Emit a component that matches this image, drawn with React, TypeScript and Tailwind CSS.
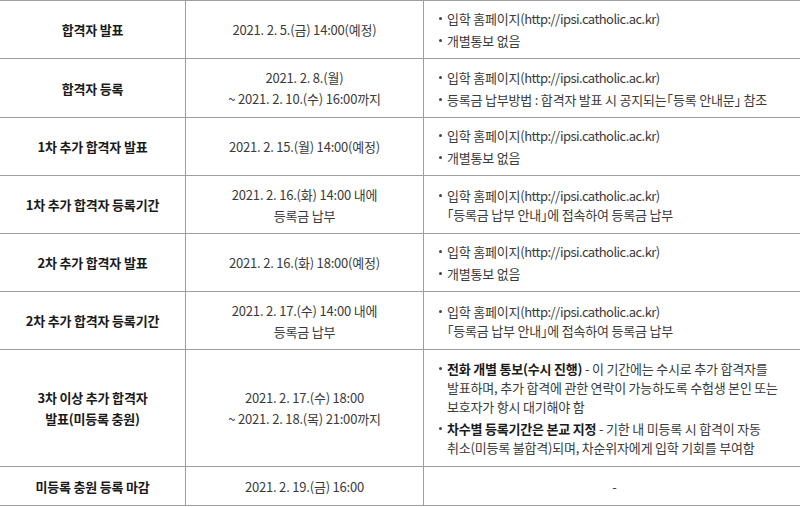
import React from 'react';

type Line = { bold?: string; text: React.ReactNode };

interface Row {
  title: React.ReactNode;
  date: React.ReactNode;
  notes: Line[][] | null;
  height: string;
}

const home = (
  <>
    입학 홈페이지<span className="tracking-[-0.55px]">(http://ipsi.catholic.ac.kr)</span>
  </>
);

const rows: Row[] = [
  {
    title: '합격자 발표',
    date: '2021. 2. 5.(금) 14:00(예정)',
    notes: [[{ text: home }], [{ text: '개별통보 없음' }]],
    height: 'h-[58px]',
  },
  {
    title: '합격자 등록',
    date: (
      <>
        2021. 2. 8.(월)
        <br />~ 2021. 2. 10.(수) 16:00까지
      </>
    ),
    notes: [[{ text: home }], [{ text: '등록금 납부방법 : 합격자 발표 시 공지되는｢등록 안내문｣ 참조' }]],
    height: 'h-[59px]',
  },
  {
    title: '1차 추가 합격자 발표',
    date: '2021. 2. 15.(월) 14:00(예정)',
    notes: [[{ text: home }], [{ text: '개별통보 없음' }]],
    height: 'h-[58px]',
  },
  {
    title: '1차 추가 합격자 등록기간',
    date: (
      <>
        2021. 2. 16.(화) 14:00 내에
        <br />
        등록금 납부
      </>
    ),
    notes: [[{ text: home }, { text: '｢등록금 납부 안내｣에 접속하여 등록금 납부' }]],
    height: 'h-[58px]',
  },
  {
    title: '2차 추가 합격자 발표',
    date: '2021. 2. 16.(화) 18:00(예정)',
    notes: [[{ text: home }], [{ text: '개별통보 없음' }]],
    height: 'h-[58px]',
  },
  {
    title: '2차 추가 합격자 등록기간',
    date: (
      <>
        2021. 2. 17.(수) 14:00 내에
        <br />
        등록금 납부
      </>
    ),
    notes: [[{ text: home }, { text: '｢등록금 납부 안내｣에 접속하여 등록금 납부' }]],
    height: 'h-[58px]',
  },
  {
    title: (
      <>
        3차 이상 추가 합격자
        <br />
        발표(미등록 충원)
      </>
    ),
    date: (
      <>
        2021. 2. 17.(수) 18:00
        <br />~ 2021. 2. 18.(목) 21:00까지
      </>
    ),
    notes: [
      [
        { bold: '전화 개별 통보(수시 진행)', text: ' - 이 기간에는 수시로 추가 합격자를' },
        { text: '발표하며, 추가 합격에 관한 연락이 가능하도록 수험생 본인 또는' },
        { text: '보호자가 항시 대기해야 함' },
      ],
      [
        { bold: '차수별 등록기간은 본교 지정', text: ' - 기한 내 미등록 시 합격이 자동' },
        { text: '취소(미등록 불합격)되며, 차순위자에게 입학 기회를 부여함' },
      ],
    ],
    height: 'h-[117px]',
  },
  {
    title: '미등록 충원 등록 마감',
    date: '2021. 2. 19.(금) 16:00',
    notes: null,
    height: 'h-[39px]',
  },
];

function Notes({ items }: { items: Line[][] | null }) {
  if (!items) {
    return <div className="w-full text-center">-</div>;
  }
  return (
    <ul className="flex flex-col gap-[3px]">
      {items.map((lines, i) => (
        <li key={i} className="flex">
          <span className="flex w-[8px] shrink-0 pt-[8px]">
            <span className="h-[3px] w-[3px] rounded-full bg-[#444]" />
          </span>
          <div>
            {lines.map((line, j) => (
              <div key={j} className="whitespace-nowrap">
                {line.bold && <b className="font-bold text-[#1a1a1a]">{line.bold}</b>}
                {line.text}
              </div>
            ))}
          </div>
        </li>
      ))}
    </ul>
  );
}

export default function App() {
  return (
    <div
      className="w-[800px] border-t border-[#9e9e9e] bg-white text-[13px] leading-[19px] tracking-[-0.2px] text-[#3a3a3a]"
      style={{ fontFamily: '"Noto Sans CJK KR", "Noto Sans", sans-serif' }}
    >
      {rows.map((row, idx) => (
        <div key={idx} className={`flex border-b border-[#9e9e9e] ${row.height}`}>
          <div className="flex w-[186px] shrink-0 items-center justify-center border-r border-[#9e9e9e] text-center font-bold text-[#1a1a1a]">
            <div className="leading-[21px]">{row.title}</div>
          </div>
          <div className="flex w-[238px] shrink-0 items-center justify-center border-r border-[#9e9e9e] text-center">
            <div className="leading-[21px]">{row.date}</div>
          </div>
          <div className="flex flex-1 items-center pl-[15px] pr-[10px]">
            <Notes items={row.notes} />
          </div>
        </div>
      ))}
    </div>
  );
}
